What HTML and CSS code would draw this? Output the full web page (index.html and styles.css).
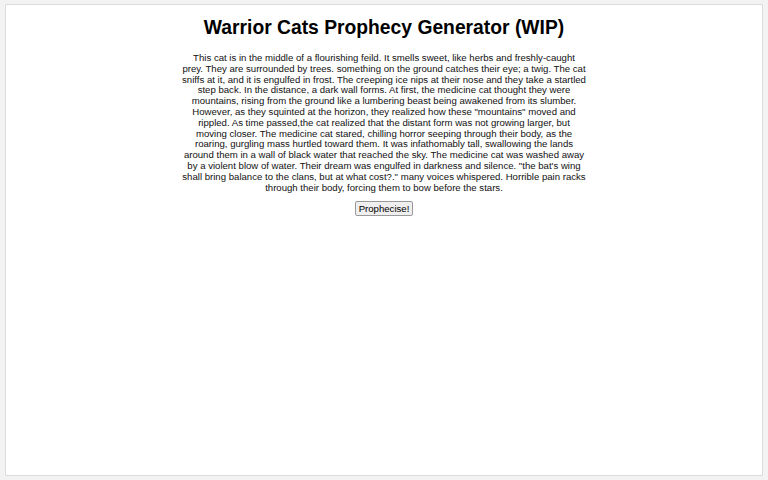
FILE: index.html
```
<!DOCTYPE html>
<html lang="en">
  <head>
    <meta charset="UTF-8" />
    <meta name="viewport" content="width=device-width, initial-scale=1" />
    <title>Warrior Cats Prophecy Generator</title>
    <link rel="stylesheet" href="styles.css">
  </head>
  <body>
    <div id="page">
      <h1>Warrior Cats Prophecy Generator (WIP)</h1>
      <p id="prophecy">This cat is in the middle of a flourishing feild. It smells sweet, like herbs and freshly-caught prey. They are surrounded by trees. something on the ground catches their eye; a twig. The cat sniffs at it, and it is engulfed in frost. The creeping ice nips at their nose and they take a startled step back. In the distance, a dark wall forms. At first, the medicine cat thought they were mountains, rising from the ground like a lumbering beast being awakened from its slumber. However, as they squinted at the horizon, they realized how these "mountains" moved and rippled. As time passed,the cat realized that the distant form was not growing larger, but moving closer. The medicine cat stared, chilling horror seeping through their body, as the roaring, gurgling mass hurtled toward them. It was infathomably tall, swallowing the lands around them in a wall of black water that reached the sky. The medicine cat was washed away by a violent blow of water. Their dream was engulfed in darkness and silence. "the bat's wing shall bring balance to the clans, but at what cost?." many voices whispered. Horrible pain racks through their body, forcing them to bow before the stars.</p>
      <button id="generate">Prophecise!</button>
    </div>
  </body>
</html>
```
FILE: styles.css
```
html,
body {
  height: 100%;
}
body {
  margin: 0;
  padding: 4px 5px 4px 5px;
  box-sizing: border-box;
  background: #f3f3f3;
  font-family: "Liberation Sans", Arial, sans-serif;
  color: #111;
}
#page {
  height: 100%;
  box-sizing: border-box;
  background: #fff;
  border: 1px solid #dcdcdc;
  display: flex;
  flex-direction: column;
  align-items: center;
}
h1 {
  margin: 11px 0 0;
  font-size: 19.3px;
  line-height: 24px;
  color: #000;
}
#prophecy {
  width: 404px;
  margin: 13px 0 0;
  font-size: 9.6px;
  line-height: 10.8px;
  text-align: center;
}
#generate {
  margin-top: 8px;
  padding: 0 3px;
  height: 15px;
  font-family: inherit;
  font-size: 9.6px;
  color: #000;
  background: #efefef;
  border: 1px solid #999;
  border-radius: 2px;
}
```
